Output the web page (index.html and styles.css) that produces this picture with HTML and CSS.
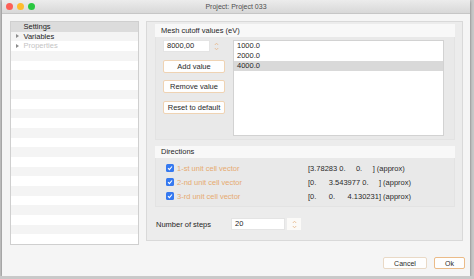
FILE: index.html
```html
<!DOCTYPE html>
<html lang="en">
<head>
    <meta charset="UTF-8">
    <title>Project: Project 033</title>
    <link rel="stylesheet" href="styles.css">
</head>
<body>
<div class="window">
    <div class="titlebar">
        <div class="lights">
            <span class="light red"></span>
            <span class="light yellow"></span>
            <span class="light green"></span>
        </div>
        <div class="title">Project: Project 033</div>
    </div>

    <div class="content">
        <div class="main">
            <div class="tree">
                <div class="row selected"><span class="arrow none"></span>Settings</div>
                <div class="row"><span class="arrow"></span>Variables</div>
                <div class="row disabled"><span class="arrow"></span>Properties</div>
            </div>

            <div class="panel">
                <div class="group">
                    <div class="group-title">Mesh cutoff values (eV)</div>
                    <div class="group-body mesh-body">
                        <div class="mesh-controls">
                            <div class="spin">
                                <div class="spin-field small">8000,00</div>
                                <div class="spin-arrows">
                                    <svg width="5" height="9" viewBox="0 0 5 9"><path d="M0.8 3L2.5 1.2L4.2 3M0.8 6L2.5 7.8L4.2 6" fill="none" stroke="#e8bb92" stroke-width="0.9"/></svg>
                                </div>
                            </div>
                            <button class="btn">Add value</button>
                            <button class="btn">Remove value</button>
                            <button class="btn">Reset to default</button>
                        </div>
                        <div class="list">
                            <div class="item">1000.0</div>
                            <div class="item">2000.0</div>
                            <div class="item selected">4000.0</div>
                        </div>
                    </div>
                </div>

                <div class="group directions">
                    <div class="group-title">Directions</div>
                    <div class="group-body dir-body">
                        <span class="check"><svg width="8" height="8" viewBox="0 0 8 8"><path d="M2 4.2L3.4 5.6L6 2.5" fill="none" stroke="#fff" stroke-width="1.1"/></svg></span>
                        <span class="dir-label">1-st unit cell vector</span>
                        <span class="dir-value">[3.78283 0.     0.     ] (approx)</span>

                        <span class="check"><svg width="8" height="8" viewBox="0 0 8 8"><path d="M2 4.2L3.4 5.6L6 2.5" fill="none" stroke="#fff" stroke-width="1.1"/></svg></span>
                        <span class="dir-label">2-nd unit cell vector</span>
                        <span class="dir-value">[0.      3.543977 0.     ] (approx)</span>

                        <span class="check"><svg width="8" height="8" viewBox="0 0 8 8"><path d="M2 4.2L3.4 5.6L6 2.5" fill="none" stroke="#fff" stroke-width="1.1"/></svg></span>
                        <span class="dir-label">3-rd unit cell vector</span>
                        <span class="dir-value">[0.      0.      4.130231] (approx)</span>
                    </div>
                </div>

                <div class="steps">
                    <span class="steps-label">Number of steps</span>
                    <div class="spin">
                        <div class="spin-field wide">20</div>
                        <div class="spin-arrows wide">
                            <svg width="5" height="9" viewBox="0 0 5 9"><path d="M0.8 3L2.5 1.2L4.2 3M0.8 6L2.5 7.8L4.2 6" fill="none" stroke="#e8bb92" stroke-width="0.9"/></svg>
                        </div>
                    </div>
                </div>
            </div>
        </div>

        <div class="footer">
            <button class="btn cancel">Cancel</button>
            <button class="btn ok">Ok</button>
        </div>
    </div>
</div>
</body>
</html>
```

FILE: styles.css
```css
html, body {
    margin: 0;
    padding: 0;
    background: #c9c9c9;
    font-family: "Liberation Sans", Arial, sans-serif;
    font-size: 7.5px;
    color: #262626;
}
.window {
    margin-left: 2px;
    width: 468px;
    height: 276px;
    background: #f5f5f5;
    box-shadow: 0 1px 3px rgba(0, 0, 0, 0.45);
    display: flex;
    flex-direction: column;
}
.titlebar {
    height: 13px;
    border-bottom: 1px solid #c6c6c6;
    background: linear-gradient(#ececec, #d8d8d8);
    position: relative;
    display: flex;
    justify-content: center;
    align-items: center;
}
.lights {
    position: absolute;
    left: 4px;
    top: 3px;
    display: flex;
    gap: 4px;
}
.light {
    width: 7px;
    height: 7px;
    border-radius: 50%;
}
.red { background: #fd5f57; }
.yellow { background: #febc2e; }
.green { background: #29c740; }
.title {
    font-size: 7px;
    color: #4e4e4e;
}
.content {
    flex: 1;
    padding: 7px 7px 7px 8px;
    display: flex;
    flex-direction: column;
}
.main {
    display: flex;
    gap: 7px;
    align-items: flex-start;
}

/* left tree */
.tree {
    width: 127px;
    height: 222px;
    border: 1px solid #cfcfcf;
    background: repeating-linear-gradient(#fff 0 9.65px, #f4f4f4 9.65px 19.3px);
}
.row {
    height: 9.65px;
    line-height: 9.65px;
    display: flex;
    align-items: center;
    padding-left: 5px;
    color: #222;
}
.row.selected { background: #dcdcdc; }
.row.disabled { color: #c4c4c4; }
.arrow {
    width: 0;
    height: 0;
    border-left: 3.5px solid #8c8c8c;
    border-top: 2.2px solid transparent;
    border-bottom: 2.2px solid transparent;
    margin-right: 4.5px;
}
.arrow.none { border-left-color: transparent; }

/* right panel */
.panel {
    width: 300px;
    height: 216px;
    border: 1px solid #d9d9d9;
    background: #ececec;
    padding: 2px 7px 0 8px;
}
.group-title {
    height: 13px;
    line-height: 13px;
    padding-left: 6px;
    background: #f8f8f8;
}
.group-body {
    background: #e9e9e9;
    border: 1px solid #e3e3e3;
    border-top: none;
}
.mesh-body {
    height: 96px;
    padding: 3px 10px 3px 7px;
    display: flex;
    gap: 8px;
}
.mesh-controls {
    width: 62px;
    display: flex;
    flex-direction: column;
    gap: 7.7px;
}
.spin {
    display: flex;
    height: 12px;
}
.spin-field {
    background: #fff;
    border: 1px solid #e4e4e4;
    line-height: 10px;
    padding-left: 3px;
    box-sizing: border-box;
}
.spin-field.small { width: 47px; }
.spin-field.wide { width: 54px; }
.spin-arrows {
    width: 12px;
    display: flex;
    align-items: center;
    justify-content: center;
}
.spin-arrows.wide {
    width: 14px;
    margin-left: 2px;
    background: #fbfaf8;
}
.btn {
    height: 13px;
    padding: 0;
    font-family: inherit;
    font-size: 7.5px;
    color: #2a2a2a;
    background: #fefefe;
    border: 1px solid #efd3b3;
    border-radius: 2px;
}
.list {
    flex: 1;
    height: 94px;
    background: #fff;
    border: 1px solid #d2d2d2;
}
.item {
    height: 10px;
    line-height: 10px;
    padding-left: 3px;
}
.item.selected { background: #d9d9d9; }

.directions { margin-top: 6px; }
.directions .group-title {
    height: 12px;
    line-height: 12px;
}
.dir-body {
    height: 42px;
    padding: 3px 0 3px 10px;
    display: grid;
    grid-template-columns: 8px 128px auto;
    grid-auto-rows: 14px;
    column-gap: 3px;
    align-items: center;
}
.check {
    width: 8px;
    height: 8px;
    border-radius: 1.5px;
    background: #3579f0;
    display: flex;
}
.dir-label { color: #e6aa70; }
.dir-value { white-space: pre; color: #2a2a2a; }

.steps {
    margin-top: 11px;
    display: flex;
    align-items: center;
    padding-left: 1px;
}
.steps-label { width: 75px; }

.footer {
    margin-top: auto;
    display: flex;
    justify-content: flex-end;
    gap: 7px;
    margin-right: -2px;
}
.footer .btn {
    height: 12px;
    font-size: 7px;
}
.cancel { width: 44px; border-color: #e9d9c6; }
.ok { width: 31px; border-color: #ebbb88; }
```
